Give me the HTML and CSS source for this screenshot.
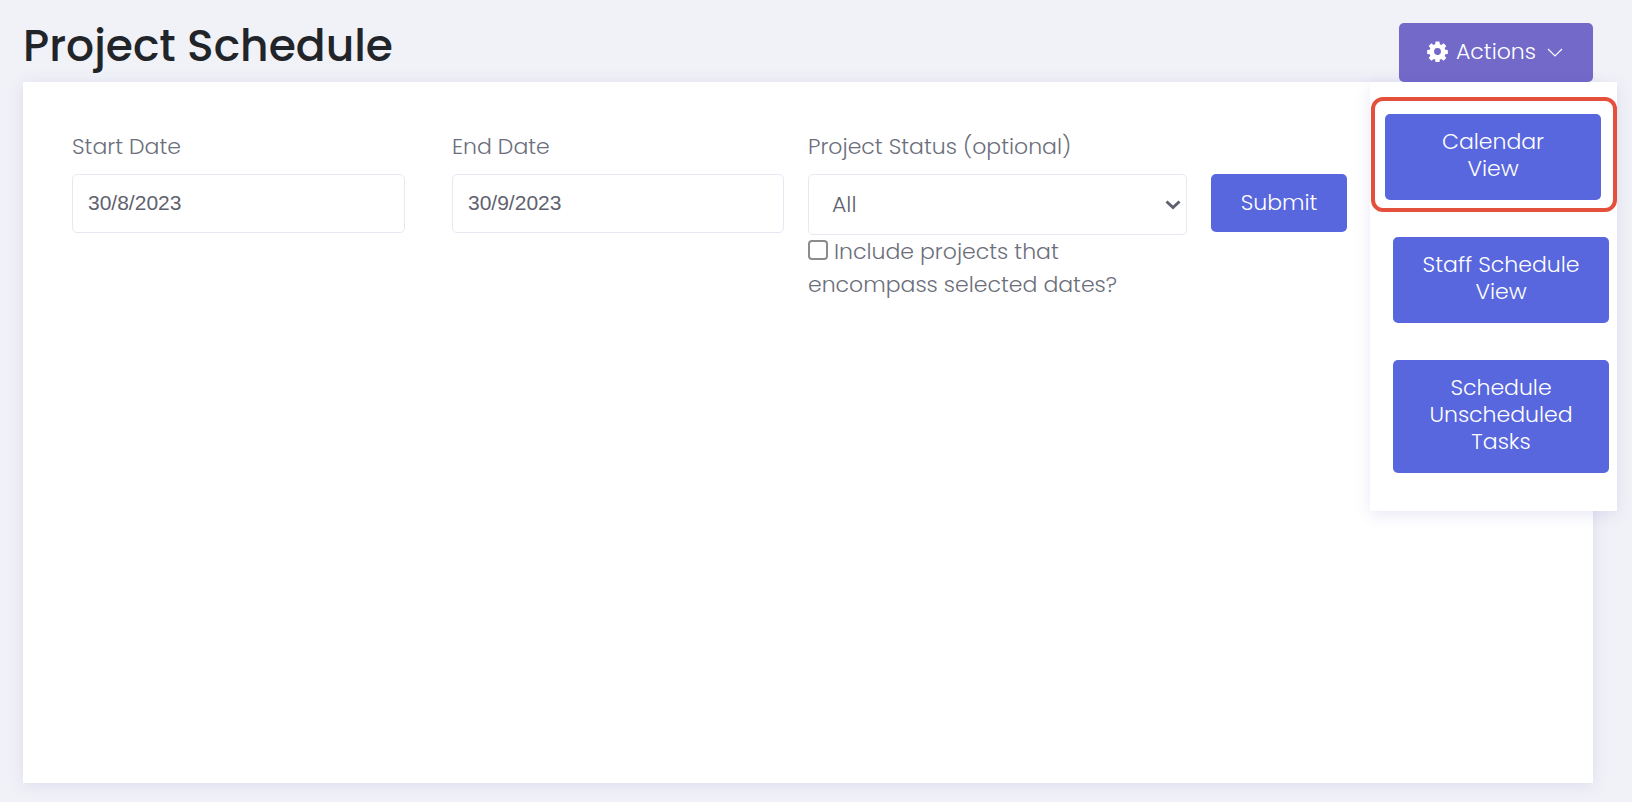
FILE: index.html
```
<!DOCTYPE html>
<html lang="en">
<head>
<meta charset="utf-8">
<title>Project Schedule</title>
<link rel="stylesheet" href="styles.css">
</head>
<body>
<header class="page-header">
  <h1 class="page-title">Project Schedule</h1>
  <div class="actions">
    <button class="actions-toggle" type="button" aria-expanded="true" aria-controls="actions-menu">
      <svg class="icon-gear" viewBox="0 0 22 22" aria-hidden="true">
        <path fill="currentColor" fill-rule="evenodd" d="M9 0.6h4l.5 2.9 1.5.6 2.4-1.7 2.8 2.8-1.7 2.4.6 1.5 2.7.4v4l-2.7.4-.6 1.5 1.7 2.4-2.8 2.8-2.4-1.7-1.5.6-.5 2.9H9l-.5-2.9-1.5-.6-2.4 1.7-2.8-2.8 1.7-2.4-.6-1.5L.2 13.5v-4l2.7-.4.6-1.5-1.7-2.4 2.8-2.8L7 4.1l1.5-.6zM11 7.4a3.6 3.6 0 1 0 0 7.2 3.6 3.6 0 0 0 0-7.2z"/>
      </svg>
      <span>Actions</span>
      <svg class="icon-chevron" viewBox="0 0 16 10" aria-hidden="true">
        <path d="M1 1l7 7 7-7" fill="none" stroke="currentColor" stroke-width="1.2"/>
      </svg>
    </button>
    <ul class="actions-menu" id="actions-menu">
      <li class="menu-item menu-item-highlighted"><button class="button" type="button">Calendar<br>View</button></li>
      <li class="menu-item"><button class="button" type="button">Staff Schedule<br>View</button></li>
      <li class="menu-item"><button class="button" type="button">Schedule<br>Unscheduled<br>Tasks</button></li>
    </ul>
  </div>
</header>
<main class="card">
  <form class="filters">
    <div class="field field-start">
      <label class="label" for="start">Start Date</label>
      <input class="control" id="start" type="text" value="30/8/2023">
    </div>
    <div class="field">
      <label class="label" for="end">End Date</label>
      <input class="control" id="end" type="text" value="30/9/2023">
    </div>
    <div class="field">
      <label class="label" for="status">Project Status (optional)</label>
      <div class="select-wrap">
        <select class="control select" id="status"><option>All</option></select>
        <svg class="select-arrow" viewBox="0 0 16 10" aria-hidden="true">
          <path d="M1.5 1.5L8 7.5l6.5-6" fill="none" stroke="currentColor" stroke-width="3"/>
        </svg>
      </div>
      <label class="check-label" for="encompass"><input class="check" id="encompass" type="checkbox">Include projects that<br>encompass selected dates?</label>
    </div>
    <button class="button submit" type="button">Submit</button>
  </form>
</main>
</body>
</html>
```
FILE: styles.css
```
* {
  box-sizing: border-box;
}

body {
  display: flex;
  flex-direction: column;
  min-height: 100vh;
  margin: 0;
  padding: 23px 39px 19px 23px;
  background: #f1f2f7;
  color: #6c6f7b;
  font-family: Poppins, Inter, sans-serif;
  font-size: 22px;
  font-weight: 300;
  line-height: 33px;
}

button,
input,
select {
  font: inherit;
}

.page-header {
  display: flex;
  justify-content: space-between;
  align-items: flex-start;
}

.page-title {
  margin: 0;
  color: #212529;
  font-size: 44px;
  font-weight: 500;
  line-height: 46px;
}

.actions {
  position: relative;
}

.actions-toggle {
  display: flex;
  align-items: center;
  gap: 8px;
  height: 59px;
  padding: 0 30px 3px 28px;
  border: 0;
  border-radius: 5px;
  background: #7269c9;
  color: #fff;
}

.icon-gear {
  width: 21px;
  height: 21px;
}

.icon-chevron {
  width: 16px;
  height: 10px;
  margin: 4px 0 0 3px;
}

.actions-menu {
  position: absolute;
  top: 100%;
  right: -24px;
  display: flex;
  flex-direction: column;
  gap: 37px;
  width: 247px;
  margin: 0;
  padding: 32px 8px 38px 23px;
  background: #fff;
  box-shadow: 0 4px 15px rgba(82, 63, 185, 0.12);
  list-style: none;
}

.menu-item {
  display: flex;
}

.menu-item-highlighted {
  position: relative;
  margin: 0 8px 0 -8px;
}

.menu-item-highlighted::after {
  position: absolute;
  inset: -17px -16px -12px -14px;
  border: 4px solid #e5503c;
  border-radius: 12px;
  content: "";
  pointer-events: none;
}

.button {
  flex: 1;
  padding: 14px 16px 18px;
  border: 0;
  border-radius: 5px;
  background: #5867dd;
  color: #fff;
  line-height: 27px;
}

.card {
  flex: 1;
  padding: 48px 246px 48px 49px;
  background: #fff;
  box-shadow: 0 2px 16px rgba(82, 63, 185, 0.12);
}

.filters {
  display: grid;
  grid-template-columns: 356fr 332fr 379fr 136px;
  gap: 24px;
  align-items: start;
}

.field {
  min-width: 0;
}

.field-start {
  padding-right: 23px;
}

.label {
  display: block;
  margin-bottom: 11px;
}

.control {
  display: block;
  width: 100%;
  height: 59px;
  padding: 0 15px 1px;
  border: 1px solid #e8e8f4;
  border-radius: 5px;
  background: #fff;
  color: #5f626e;
  font-family: "Liberation Sans", sans-serif;
  font-size: 21px;
  font-weight: 400;
}

.select-wrap {
  position: relative;
}

.select {
  height: 61px;
  padding: 0 23px;
  appearance: none;
  font-family: Poppins, Inter, sans-serif;
  font-size: 22px;
  font-weight: 300;
}

.select-arrow {
  position: absolute;
  top: 26px;
  right: 6px;
  width: 16px;
  height: 10px;
  color: #5f626e;
  pointer-events: none;
}

.check-label {
  display: block;
}

.check {
  appearance: none;
  width: 20px;
  height: 20px;
  margin: 0 6px 0 0;
  border: 2px solid #8c8c8c;
  border-radius: 4px;
  background: #fff;
  vertical-align: -1px;
}

.submit {
  height: 58px;
  margin-top: 44px;
  padding: 14px 16px 16px;
}
```
